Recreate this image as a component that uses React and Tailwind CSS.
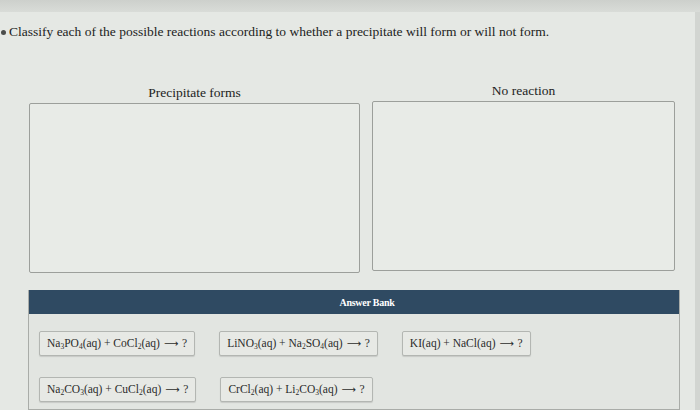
import React from "react";

const serif = { fontFamily: '"Liberation Serif", "Times New Roman", serif' };

function Sub({ children }) {
  return <sub className="text-[7.5px] relative top-[3px] align-baseline">{children}</sub>;
}

function Chip({ children }) {
  return (
    <div className="h-[25px] px-[7px] flex items-center border border-[#b3b6b2] rounded-[2px] bg-[#e7e9e5] shadow-[0_1px_1px_rgba(0,0,0,0.12)] text-[11.5px] text-[#2b2c2b] whitespace-nowrap">
      {children}
    </div>
  );
}

function Arrow() {
  return <span className="mx-[4px] text-[10px] tracking-tight" style={{ fontFamily: '"DejaVu Sans", sans-serif' }}>⟶</span>;
}

export default function App() {
  return (
    <div className="w-[700px] h-[410px] overflow-hidden bg-[#d2d5d1] flex flex-col" style={serif}>
      <div className="h-[14px] bg-gradient-to-b from-[#cdd0cc] to-[#d9dcd8]" />
      <div className="flex-1 mr-[5px] bg-[#e5e8e4] flex flex-col">
        <div className="pt-[8px] flex items-center h-[32px] pl-[1px] text-[13.5px] leading-[16px] text-[#222322]">
          <span className="w-[5px] h-[5px] rounded-full bg-[#4a4c4a] mr-[3px]" />
          <span>Classify each of the possible reactions according to whether a precipitate will form or will not form.</span>
        </div>

        <div className="mt-[41px] pl-[29px] flex gap-[12px]">
          <div className="w-[331px] flex flex-col">
            <div className="text-center text-[13.5px] leading-[16px] text-[#222322] h-[18px]">Precipitate forms</div>
            <div className="h-[170px] border border-[#9c9f9b] rounded-[2px] bg-[#e8ebe7]" />
          </div>
          <div className="w-[303px] flex flex-col">
            <div className="text-center text-[13.5px] leading-[16px] text-[#222322] h-[18px] -mt-[2px]">No reaction</div>
            <div className="h-[170px] border border-[#9c9f9b] rounded-[2px] bg-[#e8ebe7]" />
          </div>
        </div>

        <div className="mt-[17px] ml-[28px] w-[652px] flex flex-col border border-[#a9aca8] border-t-0">
          <div className="h-[24px] bg-[#2f4a62] flex items-center justify-center pl-[26px] text-white text-[10px] font-bold tracking-tight">
            Answer Bank
          </div>
          <div className="h-[95px] bg-[#e2e5e1] pl-[10px] pt-[17px] flex flex-col gap-[21px]">
            <div className="flex gap-[24px]">
              <Chip>
                Na<Sub>3</Sub>PO<Sub>4</Sub>(aq) + CoCl<Sub>2</Sub>(aq)<Arrow />?
              </Chip>
              <Chip>
                LiNO<Sub>3</Sub>(aq) + Na<Sub>2</Sub>SO<Sub>4</Sub>(aq)<Arrow />?
              </Chip>
              <Chip>
                KI(aq) + NaCl(aq)<Arrow />?
              </Chip>
            </div>
            <div className="flex gap-[24px]">
              <Chip>
                Na<Sub>2</Sub>CO<Sub>3</Sub>(aq) + CuCl<Sub>2</Sub>(aq)<Arrow />?
              </Chip>
              <Chip>
                CrCl<Sub>2</Sub>(aq) + Li<Sub>2</Sub>CO<Sub>3</Sub>(aq)<Arrow />?
              </Chip>
            </div>
          </div>
        </div>
      </div>
    </div>
  );
}
